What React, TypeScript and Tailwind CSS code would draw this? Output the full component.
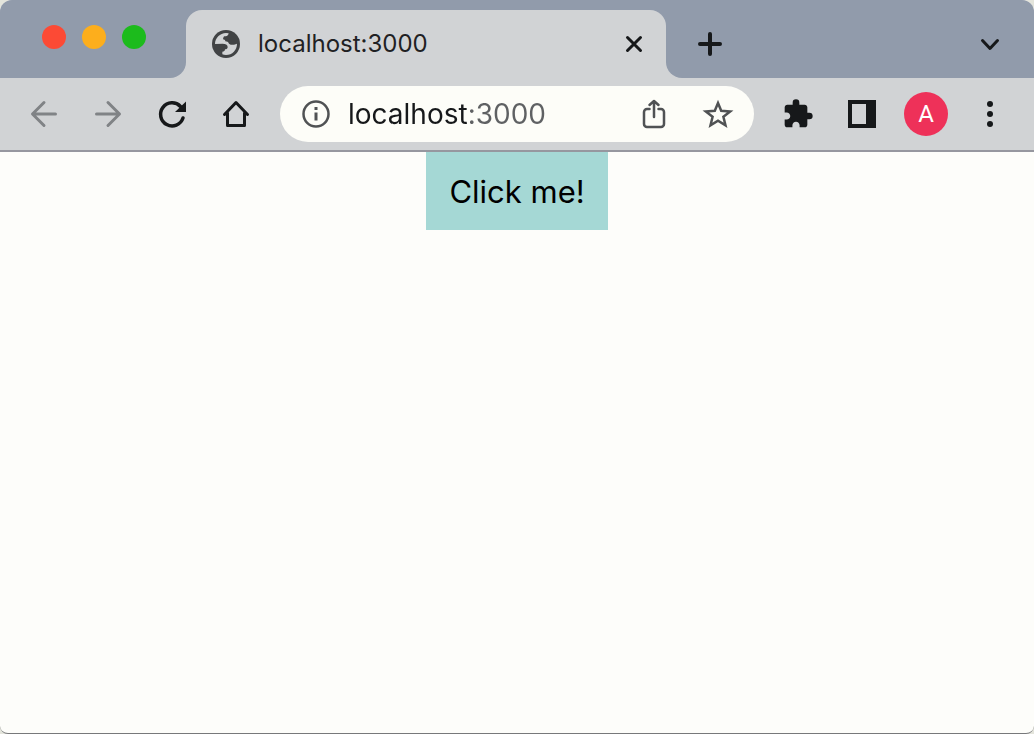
import type { ReactNode } from 'react';
import { MdExtension } from 'react-icons/md';

const TRAFFIC_LIGHTS = [
  { label: 'Close window', color: 'bg-[#fc4a35]' },
  { label: 'Minimize window', color: 'bg-[#fdae1c]' },
  { label: 'Zoom window', color: 'bg-[#1cbb1c]' },
];

type IconButtonProps = {
  label: string;
  className?: string;
  children: ReactNode;
};

function IconButton({ label, className = 'text-[#16181a]', children }: IconButtonProps) {
  return (
    <button type="button" aria-label={label} className={`flex h-14 w-16 shrink-0 items-center justify-center ${className}`}>
      {children}
    </button>
  );
}

function LineIcon({ children, width = 3 }: { children: ReactNode; width?: number }) {
  return (
    <svg
      viewBox="0 0 32 32"
      className="size-8"
      fill="none"
      stroke="currentColor"
      strokeWidth={width}
      strokeLinecap="round"
      strokeLinejoin="round"
      aria-hidden="true"
    >
      {children}
    </svg>
  );
}

function Globe() {
  return (
    <svg viewBox="0 0 84 84" className="size-7 shrink-0" aria-hidden="true">
      <circle cx="42" cy="42" r="42" fill="#414345" />
      <path
        d="M9 42C9 24 24 9 42 9l8 1c-1 8-6 9-13 9-3 1-3 5-4 9 5 0 7 3 7 6 5 0 9 2 11 7 5 4 10 4 15 3 4-1 6-2 9-3 0 19-14 34-33 34-4 0-8-1-11-2v-8c5 0 8-3 8-7 5 0 8-3 8-7 0-7-7-10-15-10Z"
        fill="#d1d3d5"
      />
    </svg>
  );
}

function TabStrip() {
  return (
    <header className="flex h-[78px] bg-[#d1d3d5]">
      <div className="flex w-[186px] shrink-0 items-start gap-4 rounded-br-2xl bg-[#919bab] pt-[25px] pl-[42px]">
        {TRAFFIC_LIGHTS.map((light) => (
          <button key={light.label} type="button" aria-label={light.label} className={`size-6 rounded-full ${light.color}`} />
        ))}
      </div>

      <div className="w-[480px] min-w-0 bg-[#919bab] pt-[10px]">
        <div className="flex h-full items-center rounded-t-2xl bg-[#d1d3d5] pr-4 pl-[26px]">
          <Globe />
          <span className="ml-[18px] flex-1 truncate text-2xl text-[#1f2123]">localhost:3000</span>
          <button type="button" aria-label="Close tab" className="flex size-8 items-center justify-center text-[#16181a]">
            <LineIcon>
              <path d="m9.500 9.500 13 13M22.500 9.500l-13 13" />
            </LineIcon>
          </button>
        </div>
      </div>

      <div className="flex flex-1 items-center justify-between rounded-bl-2xl bg-[#919bab] px-3 pt-[10px]">
        <IconButton label="New tab">
          <LineIcon width={4}>
            <path d="M16 6v20M6 16h20" />
          </LineIcon>
        </IconButton>
        <IconButton label="Search tabs">
          <LineIcon>
            <path d="m8.500 12.500 7.500 8 7.500-8" />
          </LineIcon>
        </IconButton>
      </div>
    </header>
  );
}

function Toolbar() {
  return (
    <nav className="flex items-center border-b-2 border-[#96979f] bg-[#d1d3d5] px-3 py-2">
      <IconButton label="Back" className="text-[#808386]">
        <LineIcon>
          <path d="M27.500 16H5M16 4.500 4.500 16 16 27.500" />
        </LineIcon>
      </IconButton>
      <IconButton label="Forward" className="text-[#808386]">
        <LineIcon>
          <path d="M4.500 16H27M16 4.500 27.500 16 16 27.500" />
        </LineIcon>
      </IconButton>
      <IconButton label="Reload">
        <svg viewBox="0 0 32 32" className="size-8" aria-hidden="true">
          <path d="M27 20A11.500 11.500 0 1 1 24.500 8.500" fill="none" stroke="currentColor" strokeWidth="3.500" strokeLinecap="round" />
          <path d="M30 3.500V14H19Z" fill="currentColor" />
        </svg>
      </IconButton>
      <IconButton label="Home">
        <LineIcon>
          <path d="M4.500 16.500 16 4.500l11.500 12M7.500 15v12.500h17V15" />
        </LineIcon>
      </IconButton>

      <div className="mx-3 flex h-14 min-w-0 flex-1 items-center rounded-full bg-[#fdfdf8] pr-1 pl-[22px]">
        <svg viewBox="0 0 28 28" className="size-7 shrink-0 text-[#505254]" fill="none" stroke="currentColor" strokeWidth="2.500" aria-hidden="true">
          <circle cx="14" cy="14" r="12.500" />
          <path d="M14 12.500v8M14 7v3" strokeWidth="3" />
        </svg>
        <input
          type="text"
          aria-label="Address"
          defaultValue="localhost:3000"
          className="ml-[18px] min-w-0 flex-1 bg-[linear-gradient(to_right,#16181a_119px,#5f6163_119px)] bg-clip-text text-[28px] leading-10 text-transparent outline-none"
        />
        <IconButton label="Share" className="text-[#505254]">
          <LineIcon width={2.5}>
            <path d="M11.500 11H9a3 3 0 0 0-3 3v12a3 3 0 0 0 3 3h14a3 3 0 0 0 3-3V14a3 3 0 0 0-3-3h-2.500M16 19V3.500M11.500 7 16 3l4.500 4" />
          </LineIcon>
        </IconButton>
        <IconButton label="Bookmark this page" className="text-[#505254]">
          <svg viewBox="0 0 32 32" className="size-8" fill="none" stroke="currentColor" strokeWidth="2.500" aria-hidden="true">
            <path d="m16 5 3.200 7.700 9 .7-6.800 5.400 2.100 8.500L16 22.800l-7.500 4.500 2.100-8.500-6.800-5.400 9-.7Z" />
          </svg>
        </IconButton>
      </div>

      <IconButton label="Extensions">
        <MdExtension className="size-8" />
      </IconButton>
      <IconButton label="Side panel">
        <svg viewBox="0 0 28 28" className="size-7" fill="currentColor" fillRule="evenodd" aria-hidden="true">
          <path d="M0 0h28v28H0ZM4 4v20h14V4Z" />
        </svg>
      </IconButton>
      <IconButton label="Profile" className="text-white">
        <span className="flex size-11 items-center justify-center rounded-full bg-[#ee3159] font-['Roboto',sans-serif] text-2xl">A</span>
      </IconButton>
      <IconButton label="Menu">
        <svg viewBox="0 0 32 32" className="size-8" fill="currentColor" aria-hidden="true">
          <circle cx="16" cy="6" r="3" />
          <circle cx="16" cy="16" r="3" />
          <circle cx="16" cy="26" r="3" />
        </svg>
      </IconButton>
    </nav>
  );
}

export default function App() {
  return (
    <div className="flex min-h-screen bg-[#e4e5dc] font-['Inter',sans-serif]">
      <div className="flex flex-1 flex-col overflow-hidden rounded-t-xl rounded-b-lg border-b border-[#77787a] bg-[#fdfdfa]">
        <TabStrip />
        <Toolbar />
        <main className="flex flex-1 items-start justify-center">
          <button type="button" className="bg-[#a5d8d5] px-[23px] pt-4 pb-[14px] text-[31px] leading-[48px] text-black">
            Click me!
          </button>
        </main>
      </div>
    </div>
  );
}
